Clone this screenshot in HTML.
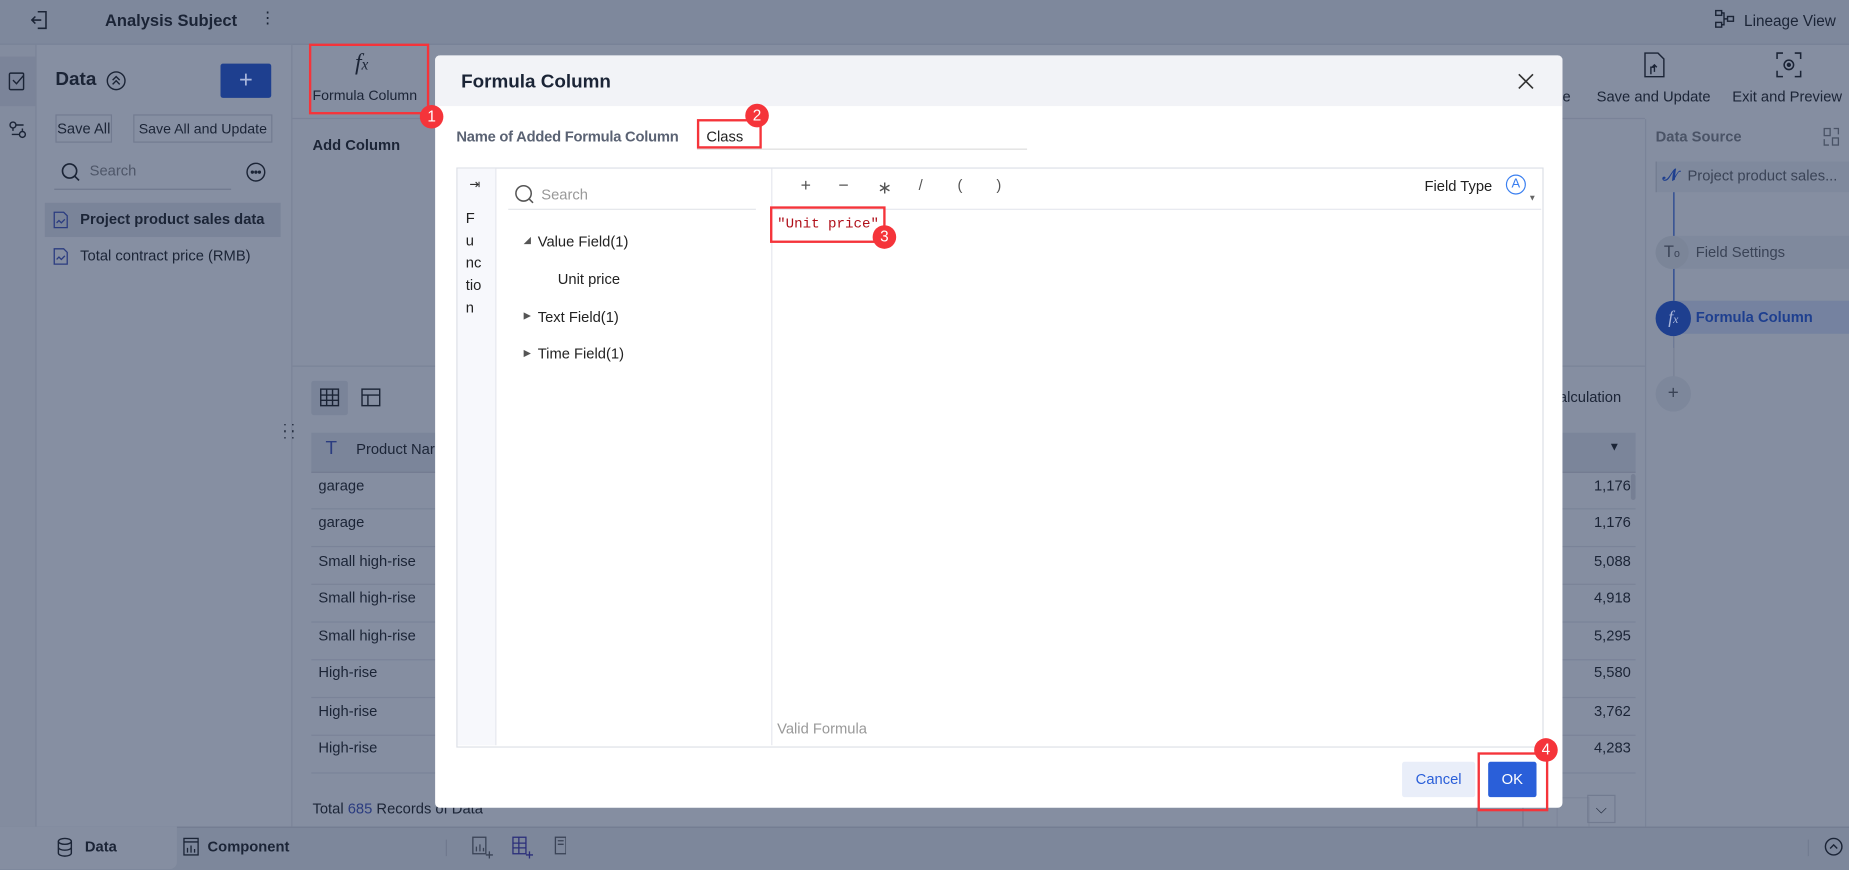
<!DOCTYPE html>
<html><head><meta charset="utf-8"><style>
html,body{margin:0;padding:0;width:1849px;height:869px;overflow:hidden;background:#858ea1}
#s{position:absolute;left:0;top:0;width:1568px;height:737px;transform:scale(1.17921);transform-origin:0 0;font-family:"Liberation Sans",sans-serif;color:#1b2436;font-size:12.5px}
.a{position:absolute;white-space:nowrap}
.b{font-weight:bold}
.badge{position:absolute;width:20px;height:20px;border-radius:50%;background:#f5343a;color:#fff;font-size:13px;text-align:center;line-height:20px}
.red{position:absolute;border:2px solid #f5343a;box-sizing:border-box}
.row{position:absolute;left:264px;width:1123px;height:31px;border-bottom:1px solid #7a8398}
.num{position:absolute;right:185px;white-space:nowrap}
</style></head><body><div id="s">
<!-- top bar -->
<div class="a" style="left:0;top:0;width:1568px;height:37px;background:#7e889c;border-bottom:1px solid #778196"></div>
<svg class="a" style="left:26px;top:8px" width="16" height="18" viewBox="0 0 16 18" fill="none" stroke="#1b2436" stroke-width="1.3"><path d="M6 2h7v14H6M9 9H1M4 6L1 9l3 3"/></svg>
<div class="a b" style="left:89px;top:9px;font-size:14px">Analysis Subject</div>
<div class="a" style="left:220px;top:7px;font-size:14px">⋮</div>
<svg class="a" style="left:1454px;top:8px" width="18" height="16" viewBox="0 0 18 16" fill="none" stroke="#1b2436" stroke-width="1.2"><rect x="1" y="1" width="5" height="4"/><rect x="1" y="11" width="5" height="4"/><rect x="11" y="6" width="5" height="4"/><path d="M6 3h2v10H6M8 8h3"/></svg>
<div class="a" style="left:1479px;top:10px;font-size:13px">Lineage View</div>
<!-- left rail -->
<div class="a" style="left:0;top:38px;width:30px;height:663px;background:#838c9f;border-right:1px solid #7a8398"></div>
<div class="a" style="left:0;top:48px;width:30px;height:42px;background:#7b8499"></div>
<svg class="a" style="left:7px;top:60px" width="16" height="18" viewBox="0 0 16 18" fill="none" stroke="#1b2436" stroke-width="1.2"><rect x="1" y="2" width="12" height="14" rx="1"/><path d="M4 8l3 3 6-7"/></svg>
<svg class="a" style="left:7px;top:102px" width="16" height="16" viewBox="0 0 16 16" fill="none" stroke="#1b2436" stroke-width="1.2"><circle cx="4" cy="4" r="2.5"/><circle cx="12" cy="12" r="2.5"/><path d="M6.5 4H13M3 12h6.5M4 7v2M12 7v2"/></svg>
<!-- left panel -->
<div class="a" style="left:31px;top:38px;width:216px;height:663px;background:#868fa2;border-right:1px solid #7a8398"></div>
<div class="a b" style="left:47px;top:59px;font-size:16px">Data</div>
<svg class="a" style="left:90px;top:60px" width="17" height="17" viewBox="0 0 17 17" fill="none" stroke="#1b2436" stroke-width="1.2"><circle cx="8.5" cy="8.5" r="7.5"/><path d="M5.5 8l3-3 3 3M5.5 11.5l3-3 3 3"/></svg>
<div class="a" style="left:187px;top:54px;width:43px;height:29px;background:#1e3f8f;border-radius:2px;color:#aab8dd;font-size:20px;text-align:center;line-height:28px">+</div>
<div class="a" style="left:47px;top:97px;width:46px;height:22px;border:1px solid #727b90;text-align:center;line-height:22px">Save All</div>
<div class="a" style="left:113px;top:97px;width:116px;height:22px;border:1px solid #727b90;text-align:center;line-height:22px;font-size:12px">Save All and Update</div>
<svg class="a" style="left:51px;top:137px" width="18" height="18" viewBox="0 0 18 18" fill="none" stroke="#1b2436" stroke-width="1.4"><circle cx="8" cy="8" r="6"/><path d="M12.5 12.5L16 16"/></svg>
<div class="a" style="left:76px;top:138px;color:#4e5668">Search</div>
<div class="a" style="left:46px;top:160px;width:150px;height:1px;background:#6f788d"></div>
<svg class="a" style="left:208px;top:137px" width="18" height="18" viewBox="0 0 18 18" fill="none" stroke="#1b2436" stroke-width="1.2"><circle cx="9" cy="9" r="7.5"/><circle cx="6" cy="9" r=".8" fill="#1b2436"/><circle cx="9" cy="9" r=".8" fill="#1b2436"/><circle cx="12" cy="9" r=".8" fill="#1b2436"/></svg>
<div class="a" style="left:38px;top:172px;width:200px;height:29px;background:#7a8499"></div>
<svg class="a" style="left:45px;top:179px" width="13" height="15" viewBox="0 0 13 15" fill="none" stroke="#2b3c80" stroke-width="1.1"><path d="M1 1h8l3 3v10H1z"/><path d="M3 10l2-2 2 2 3-3"/></svg>
<div class="a b" style="left:68px;top:179px">Project product sales data</div>
<svg class="a" style="left:45px;top:210px" width="13" height="15" viewBox="0 0 13 15" fill="none" stroke="#2b3c80" stroke-width="1.1"><path d="M1 1h8l3 3v10H1z"/><path d="M3 10l2-2 2 2 3-3"/></svg>
<div class="a" style="left:68px;top:210px">Total contract price (RMB)</div>
<!-- toolbar -->
<div class="a" style="left:248px;top:100px;width:1147px;height:1px;background:#7a8398"></div>
<div class="a" style="left:301px;top:42px;font-size:20px;font-style:italic;font-family:'Liberation Serif',serif">f<span style="font-size:13px">x</span></div>
<div class="a" style="left:265px;top:74px;font-size:12px">Formula Column</div>
<div class="red" style="left:262px;top:37px;width:102px;height:60px"></div>
<div class="a b" style="left:265px;top:116px">Add Column</div>
<svg class="a" style="left:1393px;top:44px" width="20" height="22" viewBox="0 0 20 22" fill="none" stroke="#1b2436" stroke-width="1.2"><path d="M2 1h11l5 5v15H2z"/><path d="M7 19v-6h3M10 11v6M8 13l2-2 2 2"/></svg>
<div class="a" style="left:1354px;top:75px;font-size:12.5px">Save and Update</div>
<svg class="a" style="left:1506px;top:44px" width="22" height="22" viewBox="0 0 22 22" fill="none" stroke="#1b2436" stroke-width="1.3"><path d="M1 6V1h5M16 1h5v5M21 16v5h-5M6 21H1v-5"/><circle cx="11" cy="11" r="4"/><circle cx="11" cy="11" r="1.2" fill="#1b2436"/></svg>
<div class="a" style="left:1469px;top:75px;font-size:12.5px">Exit and Preview</div>
<div class="a" style="left:1325px;top:75px">e</div>
<!-- table area -->
<div class="a" style="left:248px;top:310px;width:1147px;height:1px;background:#7a8398"></div>
<div class="a" style="left:264px;top:323px;width:31px;height:29px;background:#7a8499;border-radius:2px"></div>
<svg class="a" style="left:271px;top:329px" width="17" height="16" viewBox="0 0 17 16" fill="none" stroke="#1b2436" stroke-width="1.2"><rect x="1" y="1" width="15" height="14"/><path d="M1 6h15M1 10.5h15M6 1v14M11 1v14"/></svg>
<svg class="a" style="left:306px;top:329px" width="17" height="16" viewBox="0 0 17 16" fill="none" stroke="#1b2436" stroke-width="1.2"><rect x="1" y="1" width="15" height="14"/><path d="M1 6h15M6 6v9"/></svg>
<div class="a" style="left:240px;top:359px;font-size:12px;line-height:6px">: :<br>: :</div>
<div class="a" style="left:1322px;top:330px">alculation</div>
<div class="a" style="left:264px;top:367px;width:1123px;height:33px;background:#7b859a;border-bottom:1px solid #727b90"></div>
<div class="a" style="left:276px;top:372px;color:#2b3c80;font-size:16px">T</div>
<div class="a" style="left:302px;top:374px">Product Nar</div>
<div class="a" style="left:1364px;top:374px;font-size:10px">▼</div>
<div class="row" style="top:400px"></div><div class="a" style="left:270px;top:405px">garage</div><div class="num" style="top:405px">1,176</div>
<div class="row" style="top:432px"></div><div class="a" style="left:270px;top:436px">garage</div><div class="num" style="top:436px">1,176</div>
<div class="row" style="top:464px"></div><div class="a" style="left:270px;top:469px">Small high-rise</div><div class="num" style="top:469px">5,088</div>
<div class="row" style="top:496px"></div><div class="a" style="left:270px;top:500px">Small high-rise</div><div class="num" style="top:500px">4,918</div>
<div class="row" style="top:528px"></div><div class="a" style="left:270px;top:532px">Small high-rise</div><div class="num" style="top:532px">5,295</div>
<div class="row" style="top:560px"></div><div class="a" style="left:270px;top:563px">High-rise</div><div class="num" style="top:563px">5,580</div>
<div class="row" style="top:592px"></div><div class="a" style="left:270px;top:596px">High-rise</div><div class="num" style="top:596px">3,762</div>
<div class="row" style="top:624px"></div><div class="a" style="left:270px;top:627px">High-rise</div><div class="num" style="top:627px">4,283</div>
<div class="a" style="left:1383px;top:402px;width:4px;height:22px;background:#767f94;border-radius:2px"></div>
<div class="a" style="left:265px;top:679px">Total <span style="color:#2b3c80">685</span> Records of Data</div>
<div class="a" style="left:1252px;top:676px;width:38px;height:24px;border:1px solid #727b90"></div>
<div class="a" style="left:1320px;top:676px;width:26px;height:24px;border:1px solid #7d869a"></div>
<div class="a" style="left:1346px;top:674px;width:22px;height:22px;border:1px solid #727b90;text-align:center;line-height:22px">⌵</div>
<!-- right panel -->
<div class="a" style="left:1395px;top:101px;width:1px;height:600px;background:#7a8398"></div>
<div class="a b" style="left:1404px;top:109px;color:#4a5366">Data Source</div>
<svg class="a" style="left:1546px;top:108px" width="14" height="16" viewBox="0 0 14 16" fill="none" stroke="#4a5366" stroke-width="1.1"><rect x="1" y="1" width="5" height="6"/><rect x="8" y="9" width="5" height="6"/><path d="M9 1h4v5M1 10v5h4"/></svg>
<div class="a" style="left:1404px;top:137px;width:164px;height:26px;background:#7f899d;border-left:1px solid #727b90"></div>
<div class="a" style="left:1410px;top:140px;color:#1e3f8f;font-size:14px;font-weight:bold">𝒩</div>
<div class="a" style="left:1431px;top:142px;color:#3a4356">Project product sales...</div>
<div class="a" style="left:1419px;top:163px;width:1px;height:132px;background:#1e3f8f"></div>
<div class="a" style="left:1404px;top:200px;width:164px;height:28px;background:#7f899d;border-radius:14px 0 0 14px"></div>
<div class="a" style="left:1404px;top:200px;width:28px;height:28px;border-radius:50%;background:#7b8598"></div>
<div class="a" style="left:1411px;top:205px;color:#3a4356;font-size:14px">T<span style="font-size:9px">o</span></div>
<div class="a" style="left:1438px;top:207px;color:#3a4356">Field Settings</div>
<div class="a" style="left:1404px;top:255px;width:164px;height:28px;background:#7582a0;border-radius:14px 0 0 14px"></div>
<div class="a" style="left:1404px;top:255px;width:30px;height:30px;border-radius:50%;background:#1e3f8f;color:#a9b6da;font-style:italic;font-family:'Liberation Serif',serif;text-align:center;line-height:30px;font-size:15px">f<span style="font-size:10px">x</span></div>
<div class="a b" style="left:1438px;top:262px;color:#1e3f8f">Formula Column</div>
<div class="a" style="left:1419px;top:285px;width:1px;height:35px;background:#767f94"></div>
<div class="a" style="left:1404px;top:319px;width:30px;height:30px;border-radius:50%;background:#7d879b;text-align:center;line-height:30px;font-size:16px;color:#3a4356">+</div>
<!-- bottom bar -->
<div class="a" style="left:0;top:701px;width:1568px;height:36px;background:#7d879b;border-top:1px solid #727b90"></div>
<div class="a" style="left:0;top:701px;width:150px;height:36px;background:#858ea1;border-radius:0 0 6px 0"></div>
<svg class="a" style="left:48px;top:710px" width="14" height="17" viewBox="0 0 14 17" fill="none" stroke="#1b2436" stroke-width="1.2"><ellipse cx="7" cy="3.5" rx="5.5" ry="2.5"/><path d="M1.5 3.5v10c0 1.4 2.5 2.5 5.5 2.5s5.5-1.1 5.5-2.5v-10M1.5 8.5c0 1.4 2.5 2.5 5.5 2.5s5.5-1.1 5.5-2.5"/></svg>
<div class="a b" style="left:72px;top:711px">Data</div>
<svg class="a" style="left:155px;top:710px" width="14" height="16" viewBox="0 0 14 16" fill="none" stroke="#1b2436" stroke-width="1.1"><rect x="1" y="1" width="12" height="14"/><path d="M1 4h12M4 13V9M7 13V7M10 13V10"/></svg>
<div class="a b" style="left:176px;top:711px">Component</div>
<div class="a" style="left:378px;top:712px;width:1px;height:14px;background:#6f788d"></div>
<svg class="a" style="left:400px;top:709px" width="80" height="19" viewBox="0 0 80 19" fill="none" stroke-width="1.1"><g stroke="#3a4356"><rect x="1" y="1" width="11" height="14"/><path d="M4 13V9M7 13V7M10 13V10M12 16h6M15 13v6"/></g><g stroke="#2b2f7a"><rect x="35" y="1" width="11" height="14"/><path d="M35 6h11M35 10h11M40 1v14M46 16h6M49 13v6"/></g><g stroke="#3a4356"><rect x="71" y="1" width="9" height="14"/><path d="M73 4h5M73 7h5"/></g></svg>
<div class="a" style="left:1533px;top:712px;width:1px;height:14px;background:#727b90"></div>
<svg class="a" style="left:1547px;top:710px" width="16" height="16" viewBox="0 0 16 16" fill="none" stroke="#1b2436" stroke-width="1.2"><circle cx="8" cy="8" r="7"/><path d="M5 9.5l3-3 3 3"/></svg>

<!-- modal -->
<div class="a" style="left:369px;top:47px;width:956px;height:638px;background:#fff;border-radius:4px;overflow:hidden">
  <div class="a" style="left:0;top:0;width:956px;height:43px;background:#f2f3f7"></div>
</div>
<div class="badge" style="left:356px;top:89px">1</div>
<div class="a b" style="left:391px;top:61px;font-size:16px;color:#1b2436">Formula Column</div>
<svg class="a" style="left:1287px;top:62px" width="14" height="14" viewBox="0 0 14 14" stroke="#333" stroke-width="1.4"><path d="M1 1l12 12M13 1L1 13"/></svg>
<div class="a b" style="left:387px;top:109px;color:#5a6273;font-size:12.5px;letter-spacing:-0.2px">Name of Added Formula Column</div>
<div class="a" style="left:599px;top:109px;color:#222">Class</div>
<div class="a" style="left:591px;top:126px;width:280px;height:1px;background:#ddd"></div>
<div class="red" style="left:591px;top:101px;width:55px;height:25px"></div>
<div class="badge" style="left:632px;top:88px">2</div>
<div class="a" style="left:387px;top:142px;width:920px;height:490px;border:1px solid #dcdfe6"></div>
<div class="a" style="left:388px;top:143px;width:32px;height:489px;background:#f7f8fc;border-right:1px solid #e6e8ee"></div>
<div class="a" style="left:398px;top:150px;font-size:11px;color:#333">⇥</div>
<div class="a" style="left:395px;top:176px;line-height:19px;color:#222;white-space:normal;width:20px">F<br>u<br>nc<br>tio<br>n</div>
<svg class="a" style="left:436px;top:156px" width="18" height="18" viewBox="0 0 18 18" fill="none" stroke="#555" stroke-width="1.3"><circle cx="8" cy="8" r="6.5"/><path d="M12.5 12.5L16 16"/></svg>
<div class="a" style="left:459px;top:158px;color:#999">Search</div>
<div class="a" style="left:431px;top:177px;width:210px;height:1px;background:#e3e5ea"></div>
<div class="a" style="left:444px;top:199px;font-size:8px;color:#555">◢</div>
<div class="a" style="left:456px;top:198px;color:#222">Value Field(1)</div>
<div class="a" style="left:473px;top:230px;color:#222">Unit price</div>
<div class="a" style="left:444px;top:263px;font-size:8px;color:#555">▶</div>
<div class="a" style="left:456px;top:262px;color:#222">Text Field(1)</div>
<div class="a" style="left:444px;top:295px;font-size:8px;color:#555">▶</div>
<div class="a" style="left:456px;top:293px;color:#222">Time Field(1)</div>
<div class="a" style="left:654px;top:143px;width:1px;height:489px;background:#e6e8ee"></div>
<div class="a" style="left:655px;top:177px;width:652px;height:1px;background:#e6e8ee"></div>
<div class="a" style="left:679px;top:149px;font-size:15px;color:#555">+</div>
<div class="a" style="left:711px;top:149px;font-size:15px;color:#555">−</div>
<div class="a" style="left:744px;top:150px;font-size:15px;color:#555">∗</div>
<div class="a" style="left:779px;top:150px;color:#555">/</div>
<div class="a" style="left:812px;top:150px;color:#555">(</div>
<div class="a" style="left:845px;top:150px;color:#555">)</div>
<div class="a" style="left:1208px;top:151px;color:#222">Field Type</div>
<div class="a" style="left:1277px;top:148px;width:15px;height:15px;border:1.3px solid #3a7ff0;border-radius:50%;color:#3a7ff0;font-size:11px;text-align:center;line-height:15px">A</div>
<div class="a" style="left:1296px;top:165px;font-size:7px;color:#666">▼</div>
<div class="a" style="left:659px;top:183px;font-family:'Liberation Mono',monospace;font-size:12px;color:#b0101a">"Unit price"</div>
<div class="red" style="left:653px;top:175px;width:98px;height:31px"></div>
<div class="badge" style="left:740px;top:191px">3</div>
<div class="a" style="left:659px;top:611px;color:#999">Valid Formula</div>
<div class="a" style="left:1189px;top:646px;width:62px;height:30px;background:#e9eef9;border-radius:2px;color:#2a5fd9;text-align:center;line-height:30px">Cancel</div>
<div class="a" style="left:1262px;top:646px;width:41px;height:30px;background:#2a5fd9;border-radius:2px;color:#fff;text-align:center;line-height:30px">OK</div>
<div class="red" style="left:1253px;top:638px;width:60px;height:50px"></div>
<div class="badge" style="left:1301px;top:626px">4</div>
</div></body></html>
